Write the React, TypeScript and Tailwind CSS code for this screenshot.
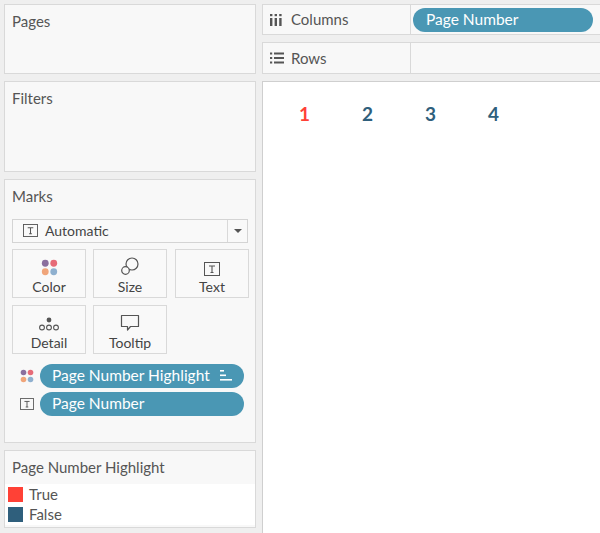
const font = { fontFamily: 'Lato, "Open Sans", sans-serif' }

const TextIcon = ({ className = '' }: { className?: string }) => (
  <svg className={className} viewBox="0 0 16 14" fill="none">
    <rect x="0.5" y="0.5" width="15" height="13" stroke="#555" strokeWidth="1" />
    <path d="M5 4h6M8 4v6.5M6.5 10.5h3" stroke="#555" strokeWidth="1.1" />
  </svg>
)

const ColorDots = ({ size = 18 }: { size?: number }) => (
  <svg width={size} height={size} viewBox="0 0 18 18">
    <circle cx="4.5" cy="4.5" r="3.6" fill="#8b6f9e" />
    <circle cx="13.5" cy="4.5" r="3.6" fill="#e66b78" />
    <circle cx="4.5" cy="13.5" r="3.6" fill="#f0a57a" />
    <circle cx="13.5" cy="13.5" r="3.6" fill="#8fb0cf" />
  </svg>
)

const SizeIcon = () => (
  <svg width="20" height="20" viewBox="0 0 20 20" fill="none" stroke="#555" strokeWidth="1.2">
    <circle cx="12" cy="8" r="6" />
    <circle cx="5.5" cy="14.5" r="3.8" fill="#f9f9f9" />
  </svg>
)

const DetailIcon = () => (
  <svg width="22" height="16" viewBox="0 0 22 16" fill="none" stroke="#555" strokeWidth="1.1">
    <circle cx="11" cy="4" r="2.4" fill="#555" stroke="none" />
    <circle cx="4" cy="11.5" r="2.4" />
    <circle cx="11" cy="11.5" r="2.4" />
    <circle cx="18" cy="11.5" r="2.4" />
  </svg>
)

const TooltipIcon = () => (
  <svg width="20" height="18" viewBox="0 0 20 18" fill="none" stroke="#555" strokeWidth="1.2">
    <path d="M1.5 1.5h17v11h-8l-3 3.5v-3.5h-6z" strokeLinejoin="round" />
  </svg>
)

const Card = ({ title, className }: { title: string; className: string }) => (
  <div className={`border border-[#d9d9d9] bg-[#f8f8f8] ${className}`}>
    <div className="px-[7px] pt-[5px] text-[15px] text-[#555]">{title}</div>
  </div>
)

const MarkButton = ({ icon, label }: { icon: React.ReactNode; label: string }) => (
  <div className="flex h-[49px] w-[74px] flex-col items-center border border-[#d9d9d9] bg-[#f9f9f9]">
    <div className="flex h-[28px] items-end pb-[2px]">{icon}</div>
    <div className="text-[14px] leading-[18px] text-[#444]">{label}</div>
  </div>
)

const Pill = ({ label, sort }: { label: string; sort?: boolean }) => (
  <div className="flex h-[24px] flex-1 items-center justify-between rounded-full bg-[#4a97b4] pl-[12px] pr-[12px] text-[15.5px] text-white">
    <span>{label}</span>
    {sort && (
      <svg width="12" height="11" viewBox="0 0 12 11" fill="white">
        <rect x="0" y="0" width="4" height="1.6" />
        <rect x="0" y="4.5" width="6" height="1.6" />
        <rect x="0" y="9" width="12" height="1.6" />
      </svg>
    )}
  </div>
)

export default function App() {
  return (
    <div className="h-[533px] w-[600px] overflow-hidden bg-[#efefef]" style={font}>
      <div className="flex gap-[6px] pl-[4px] pt-[4px]">
        {/* left column */}
        <div className="flex w-[252px] shrink-0 flex-col gap-[7px]">
          <Card title="Pages" className="h-[70px]" />
          <Card title="Filters" className="h-[91px]" />

          <div className="h-[264px] border border-[#d9d9d9] bg-[#f8f8f8] px-[7px]">
            <div className="pt-[5px] text-[15px] text-[#555]">Marks</div>
            <div className="mt-[11px] flex h-[24px] items-center border border-[#d4d4d4] bg-[#f9f9f9]">
              <div className="flex flex-1 items-center gap-[7px] pl-[10px] text-[14px] text-[#444]">
                <TextIcon className="h-[13px] w-[15px]" />
                Automatic
              </div>
              <div className="flex h-full w-[20px] items-center justify-center border-l border-[#d9d9d9]">
                <div className="h-0 w-0 border-x-[4px] border-t-[4px] border-x-transparent border-t-[#555]" />
              </div>
            </div>
            <div className="mt-[6px] grid grid-cols-[74px_75px_74px] gap-x-[7px] gap-y-[7px]">
              <MarkButton icon={<ColorDots size={17} />} label="Color" />
              <MarkButton icon={<SizeIcon />} label="Size" />
              <MarkButton icon={<TextIcon className="h-[14px] w-[16px]" />} label="Text" />
              <MarkButton icon={<DetailIcon />} label="Detail" />
              <MarkButton icon={<TooltipIcon />} label="Tooltip" />
            </div>
            <div className="mt-[10px] flex flex-col gap-[4px] pr-[4px]">
              <div className="flex items-center gap-[6px] pl-[8px]">
                <ColorDots size={14} />
                <Pill label="Page Number Highlight" sort />
              </div>
              <div className="flex items-center gap-[6px] pl-[8px]">
                <TextIcon className="h-[12px] w-[14px]" />
                <Pill label="Page Number" />
              </div>
            </div>
          </div>

          <div className="h-[78px] border border-[#d9d9d9] bg-[#f8f8f8]">
            <div className="flex h-[33px] items-center px-[7px] text-[15px] text-[#555]">
              Page Number Highlight
            </div>
            <div className="flex flex-col gap-[5px] bg-white px-[3px] pt-[3px] pb-[3px] text-[15px] text-[#555]">
              <div className="flex h-[15px] items-center gap-[6px]">
                <div className="h-[15px] w-[15px] bg-[#ff4136]" />
                True
              </div>
              <div className="flex h-[15px] items-center gap-[6px]">
                <div className="h-[15px] w-[15px] bg-[#2f5f7c]" />
                False
              </div>
            </div>
          </div>
        </div>

        {/* right column */}
        <div className="flex w-[342px] shrink-0 flex-col gap-[7px]">
          <div className="flex h-[31px] border border-[#d9d9d9] bg-[#f8f8f8]">
            <div className="flex w-[148px] items-center gap-[9px] border-r border-[#d9d9d9] pl-[7px] text-[15px] text-[#555]">
              <svg width="12" height="12" viewBox="0 0 12 12" fill="#555">
                <rect x="0" y="0" width="2.4" height="2.2" />
                <rect x="4.6" y="0" width="2.4" height="2.2" />
                <rect x="9.2" y="0" width="2.4" height="2.2" />
                <rect x="0" y="4" width="2.4" height="8" />
                <rect x="4.6" y="4" width="2.4" height="8" />
                <rect x="9.2" y="4" width="2.4" height="8" />
              </svg>
              Columns
            </div>
            <div className="flex items-center pl-[2px]">
              <div className="flex h-[24px] w-[180px] items-center rounded-full bg-[#4a97b4] pl-[13px] text-[15.5px] text-white">
                Page Number
              </div>
            </div>
          </div>
          <div className="flex h-[32px] border border-[#d9d9d9] bg-[#f8f8f8]">
            <div className="flex w-[148px] items-center gap-[7px] border-r border-[#d9d9d9] pl-[7px] text-[15px] text-[#555]">
              <svg width="14" height="12" viewBox="0 0 14 12" fill="#555">
                <rect x="0" y="0.5" width="2.2" height="2" />
                <rect x="4" y="0.5" width="10" height="2" />
                <rect x="0" y="5" width="2.2" height="2" />
                <rect x="4" y="5" width="10" height="2" />
                <rect x="0" y="9.5" width="2.2" height="2" />
                <rect x="4" y="9.5" width="10" height="2" />
              </svg>
              Rows
            </div>
          </div>
          <div className="h-[460px] border border-[#cfcfcf] bg-white">
            <div className="flex pl-[36px] pt-[18px] text-[19px] font-bold">
              <span className="w-[63px] text-[#ff4136]">1</span>
              <span className="w-[63px] text-[#2f5f7c]">2</span>
              <span className="w-[63px] text-[#2f5f7c]">3</span>
              <span className="w-[63px] text-[#2f5f7c]">4</span>
            </div>
          </div>
        </div>
      </div>
    </div>
  )
}
